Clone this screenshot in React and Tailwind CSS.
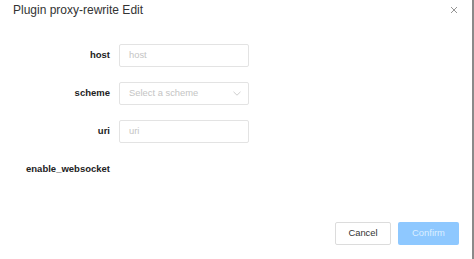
import React from "react";

const font = { fontFamily: '"Liberation Sans", Arial, sans-serif' };

const Row = ({ label, children }) => (
  <div className="flex h-[23px] items-center">
    <label className="w-[110px] shrink-0 text-right text-[9.5px] font-bold text-[#222]">
      {label}
    </label>
    <div className="ml-[9px] w-[130px]">{children}</div>
  </div>
);

const TextInput = ({ placeholder }) => (
  <div className="flex h-[23px] items-center rounded-[2px] border border-[#e3e3e3] bg-white px-[9px] text-[9.4px] text-[#c4c4c4]">
    {placeholder}
  </div>
);

export default function App() {
  return (
    <div
      className="flex h-[259px] w-[474px] flex-col border-r-2 border-[#8a8a8a] bg-white"
      style={font}
    >
      {/* Header */}
      <div className="flex h-[20px] items-center justify-between pl-[13px] pr-[14px]">
        <span className="text-[12px] text-[#333]">Plugin proxy-rewrite Edit</span>
        <svg width="8" height="8" viewBox="0 0 8 8" className="text-[#8a8a8a]">
          <path d="M1 1L7 7M7 1L1 7" stroke="currentColor" strokeWidth="0.9" />
        </svg>
      </div>

      {/* Form */}
      <div className="mt-[24px] flex flex-col gap-[15px]">
        <Row label="host">
          <TextInput placeholder="host" />
        </Row>
        <Row label="scheme">
          <div className="flex h-[23px] items-center justify-between rounded-[2px] border border-[#e3e3e3] bg-white pl-[9px] pr-[7px] text-[9.4px] text-[#c4c4c4]">
            <span>Select a scheme</span>
            <svg width="8" height="5" viewBox="0 0 8 5">
              <path d="M0.5 0.8L4 4.2L7.5 0.8" fill="none" stroke="#c8c8c8" strokeWidth="0.9" />
            </svg>
          </div>
        </Row>
        <Row label="uri">
          <TextInput placeholder="uri" />
        </Row>
        <Row label="enable_websocket" />
      </div>

      {/* Footer */}
      <div className="mt-[41px] flex justify-end gap-[7px] pr-[13px]">
        <button className="h-[23px] w-[56px] rounded-[2px] border border-[#dcdcdc] bg-white text-[9.4px] text-[#333]">
          Cancel
        </button>
        <button className="h-[23px] w-[61px] rounded-[2px] bg-[#8ec8ff] text-[9.4px] text-[#dcefff]">
          Confirm
        </button>
      </div>
    </div>
  );
}
